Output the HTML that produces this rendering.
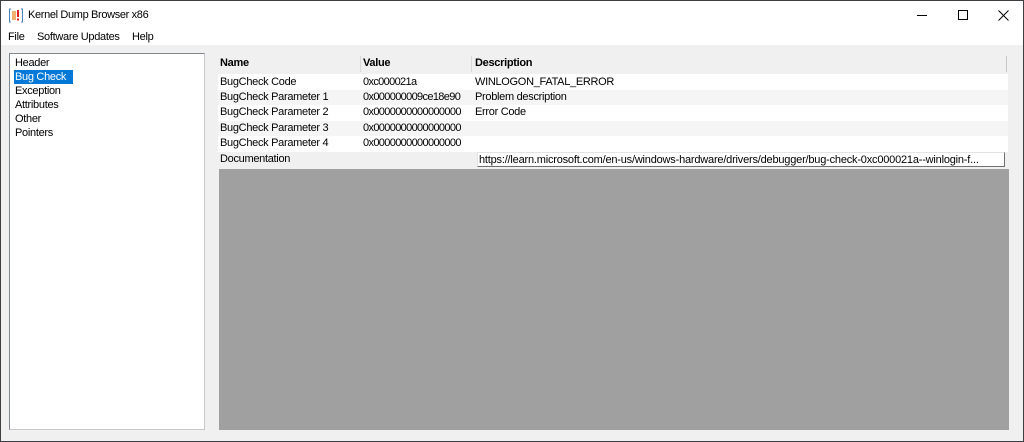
<!DOCTYPE html>
<html><head><style>
*{margin:0;padding:0;box-sizing:border-box}
body{width:1024px;height:442px;overflow:hidden;background:#f0f0f0;font-family:"Liberation Sans",sans-serif;font-size:11px;color:#000;position:relative;letter-spacing:-0.3px}
.win{position:absolute;left:0;top:0;width:1024px;height:442px;border:1px solid #3c4043;background:#f0f0f0}
.title{position:absolute;left:0;top:0;width:1022px;height:29px;background:#fff}
.menu{position:absolute;left:0;top:29px;width:1022px;height:15px;background:#fff}
.t{position:absolute;white-space:nowrap}
.v{letter-spacing:-0.65px}
.list{position:absolute;left:8px;top:52px;width:196px;height:377px;background:#fff;border:1px solid #828790;border-color:#828790 #c8c8cc #c8c8cc #828790}
.row{position:absolute;left:217px;width:790px;height:16px}
.gray{position:absolute;left:218px;top:168px;width:790px;height:261px;background:#a0a0a0}
</style></head><body><div class="win">
<div class="title">
<svg style="position:absolute;left:8px;top:7px" width="14" height="15"><path d="M2 1H0.5V14H2M12 1H13.5V14H12" stroke="#4a7fc0" fill="none"/><rect x="3" y="3" width="4" height="9" fill="#f0b070"/><rect x="8" y="2" width="2" height="7" fill="#e02020"/><rect x="8" y="10.5" width="2" height="2" fill="#e02020"/></svg>
<div class="t" style="left:27px;top:8px;font-size:11px;letter-spacing:-0.35px">Kernel Dump Browser x86</div>
<div style="position:absolute;left:916px;top:14px;width:10px;height:1px;background:#000"></div>
<div style="position:absolute;left:957px;top:9px;width:10px;height:10px;border:1px solid #000"></div>
<svg style="position:absolute;left:997px;top:9px" width="11" height="11"><path d="M0.5 0.5L10.5 10.5M10.5 0.5L0.5 10.5" stroke="#000"/></svg>
</div>
<div class="menu">
<div class="t" style="left:7px;top:1px">File</div>
<div class="t" style="left:36px;top:1px">Software Updates</div>
<div class="t" style="left:131px;top:1px">Help</div>
</div>
<div class="list">
<div class="t" style="left:5px;top:3px">Header</div>
<div style="position:absolute;left:4px;top:16px;width:59px;height:14px;background:#0078d7"></div>
<div class="t" style="left:5px;top:17px;color:#fff">Bug Check</div>
<div class="t" style="left:5px;top:31px">Exception</div>
<div class="t" style="left:5px;top:45px">Attributes</div>
<div class="t" style="left:5px;top:59px">Other</div>
<div class="t" style="left:5px;top:73px">Pointers</div>
</div>
<div style="position:absolute;left:359px;top:55px;width:1px;height:16px;background:#d8d8d8"></div>
<div style="position:absolute;left:470px;top:55px;width:1px;height:16px;background:#d8d8d8"></div>
<div style="position:absolute;left:1005px;top:55px;width:1px;height:16px;background:#c8c8c8"></div>
<div class="t" style="left:219px;top:56px;font-weight:bold">Name</div>
<div class="t" style="left:362px;top:56px;font-weight:bold">Value</div>
<div class="t" style="left:474px;top:56px;font-weight:bold">Description</div>
<div class="row" style="top:73px;background:#fff"></div>
<div class="row" style="top:89px;background:#f5f5f5"></div>
<div class="row" style="top:104px;background:#fff"></div>
<div class="row" style="top:120px;background:#f5f5f5"></div>
<div class="row" style="top:135px;background:#fff"></div>
<div class="t" style="left:219px;top:75px">BugCheck Code</div>
<div class="t" style="left:219px;top:90px">BugCheck Parameter 1</div>
<div class="t" style="left:219px;top:105px">BugCheck Parameter 2</div>
<div class="t" style="left:219px;top:121px">BugCheck Parameter 3</div>
<div class="t" style="left:219px;top:136px">BugCheck Parameter 4</div>
<div class="t" style="left:219px;top:152px">Documentation</div>
<div class="t v" style="left:362px;top:75px">0xc000021a</div>
<div class="t v" style="left:362px;top:90px">0x000000009ce18e90</div>
<div class="t v" style="left:362px;top:105px">0x0000000000000000</div>
<div class="t v" style="left:362px;top:121px">0x0000000000000000</div>
<div class="t v" style="left:362px;top:136px">0x0000000000000000</div>
<div class="t" style="left:474px;top:75px">WINLOGON_FATAL_ERROR</div>
<div class="t" style="left:474px;top:90px">Problem description</div>
<div class="t" style="left:474px;top:105px">Error Code</div>
<div style="position:absolute;left:476px;top:151px;width:528px;height:15px;background:#fff;border:1px solid #a0a0a0;border-color:#e3e3e3 #707070 #707070 #e3e3e3;overflow:hidden;white-space:nowrap;padding:1px 0 0 1px;letter-spacing:-0.2px">https://learn.microsoft.com/en-us/windows-hardware/drivers/debugger/bug-check-0xc000021a--winlogin-f...</div>
<div class="gray"></div>
</div></body></html>
